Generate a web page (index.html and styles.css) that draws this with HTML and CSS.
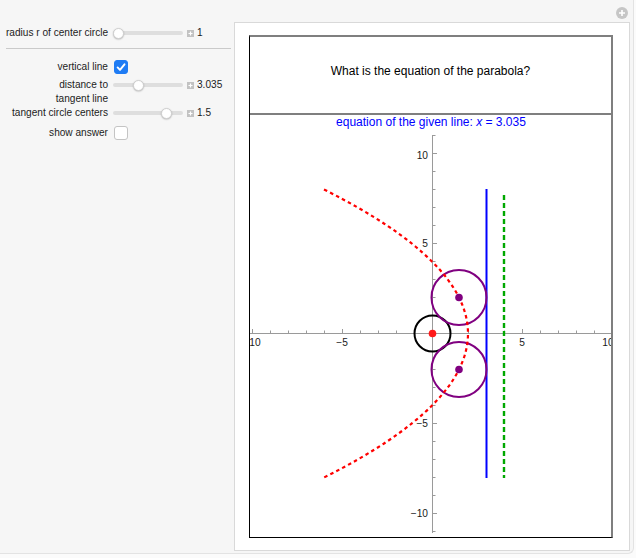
FILE: index.html
```html
<!DOCTYPE html>
<html>
<head>
<meta charset="utf-8">
<link rel="stylesheet" href="styles.css">
</head>
<body>
<div class="frame">
  <aside class="controls">
    <div class="row first">
      <span class="label">radius r of center circle</span>
      <div class="slider"><div class="track"></div><div class="thumb" style="left:0px"></div></div>
      <svg class="plus" viewBox="0 0 7 7"><rect width="7" height="7" fill="#c2c2c2"/><path d="M3.5 1.5v4M1.5 3.5h4" stroke="#fff" stroke-width="1.2"/></svg>
      <span class="value">1</span>
    </div>
    <div class="divider"></div>
    <div class="row check-row">
      <span class="label">vertical line</span>
      <span class="checkbox checked"><svg viewBox="0 0 14 14"><path d="M3.6 7.4l2.4 2.5 4.5-5.6" fill="none" stroke="#fff" stroke-width="1.9" stroke-linecap="round" stroke-linejoin="round"/></svg></span>
    </div>
    <div class="row two-line">
      <span class="label">distance to<br>tangent line</span>
      <div class="slider"><div class="track"></div><div class="thumb" style="left:19.5px"></div></div>
      <svg class="plus" viewBox="0 0 7 7"><rect width="7" height="7" fill="#c2c2c2"/><path d="M3.5 1.5v4M1.5 3.5h4" stroke="#fff" stroke-width="1.2"/></svg>
      <span class="value">3.035</span>
    </div>
    <div class="row">
      <span class="label">tangent circle centers</span>
      <div class="slider"><div class="track"></div><div class="thumb" style="left:47.5px"></div></div>
      <svg class="plus" viewBox="0 0 7 7"><rect width="7" height="7" fill="#c2c2c2"/><path d="M3.5 1.5v4M1.5 3.5h4" stroke="#fff" stroke-width="1.2"/></svg>
      <span class="value">1.5</span>
    </div>
    <div class="row check-row last">
      <span class="label">show answer</span>
      <span class="checkbox"></span>
    </div>
  </aside>
  <main class="output">
    <div class="topbar">
      <svg class="addicon" viewBox="0 0 12 12"><circle cx="6" cy="6" r="6" fill="#c6c6c6"/><path d="M6 3v6M3 6h6" stroke="#fff" stroke-width="1.6"/></svg>
    </div>
    <div class="panel">
      <div class="plotbox">
        <div class="question">What is the equation of the parabola?</div>
        <svg class="graph" width="361" height="422" viewBox="250 115 361 422">
          <text class="plotlabel" x="431" y="126" text-anchor="middle">equation of the given line: <tspan font-style="italic">x</tspan> = 3.035</text>
          <g class="axes" stroke="#9a9a9a" stroke-width="1">
            <line x1="250" y1="333.5" x2="611" y2="333.5"/>
            <line x1="432.5" y1="135" x2="432.5" y2="533"/>
            <path d="M252.5 333v-4M270.5 333v-2.5M288.5 333v-2.5M306.5 333v-2.5M324.5 333v-2.5M342.5 333v-4M360.5 333v-2.5M378.5 333v-2.5M396.5 333v-2.5M414.5 333v-2.5M450.5 333v-2.5M468.5 333v-2.5M486.5 333v-2.5M504.5 333v-2.5M522.5 333v-4M540.5 333v-2.5M558.5 333v-2.5M576.5 333v-2.5M594.5 333v-2.5"/>
            <path d="M433 135.5h2.5M433 153.5h4M433 171.5h2.5M433 189.5h2.5M433 207.5h2.5M433 225.5h2.5M433 243.5h4M433 261.5h2.5M433 279.5h2.5M433 297.5h2.5M433 315.5h2.5M433 351.5h2.5M433 369.5h2.5M433 387.5h2.5M433 405.5h2.5M433 423.5h4M433 441.5h2.5M433 459.5h2.5M433 477.5h2.5M433 495.5h2.5M433 513.5h4M433 531.5h2.5"/>
          </g>
          <g class="ticklabels">
            <text x="252" y="346" text-anchor="middle">−10</text>
            <text x="342" y="346" text-anchor="middle">−5</text>
            <text x="522" y="346" text-anchor="middle">5</text>
            <text x="608" y="346" text-anchor="middle">10</text>
            <text x="428" y="159" text-anchor="end">10</text>
            <text x="428" y="247" text-anchor="end">5</text>
            <text x="428" y="427" text-anchor="end">−5</text>
            <text x="428" y="517" text-anchor="end">−10</text>
          </g>
          <line x1="486.5" y1="189" x2="486.5" y2="478" stroke="#0000ff" stroke-width="2"/>
          <line x1="504" y1="195" x2="504" y2="478" stroke="#00a800" stroke-width="2.4" stroke-dasharray="5 3"/>
          <circle cx="432.5" cy="333.5" r="18" fill="none" stroke="#000" stroke-width="2"/>
          <circle cx="459" cy="297.5" r="27.5" fill="none" stroke="#800080" stroke-width="2"/>
          <circle cx="459" cy="369.5" r="27.5" fill="none" stroke="#800080" stroke-width="2"/>
          <path d="M324 189.5 Q612 333.5 324 477.5" fill="none" stroke="#ff0000" stroke-width="2.2" stroke-dasharray="3.5 3.2"/>
          <circle cx="432.5" cy="333.5" r="3.8" fill="#ff1a1a"/>
          <circle cx="459" cy="297.5" r="3.8" fill="#800080"/>
          <circle cx="459" cy="369.5" r="3.8" fill="#800080"/>
        </svg>
      </div>
    </div>
  </main>
</div>
</body>
</html>
```
FILE: styles.css
```css
html, body {
  margin: 0;
  padding: 0;
  background: #fbfbfb;
}
.frame {
  display: flex;
  width: 633px;
  height: 553px;
  background: #f6f6f6;
  border-right: 1px solid #e3e3e3;
  border-bottom: 1px solid #e3e3e3;
  border-bottom-right-radius: 6px;
  font-family: "Liberation Sans", Arial, sans-serif;
}
.controls {
  width: 234px;
  flex: none;
  box-sizing: border-box;
  padding: 26px 0 0 6px;
  font-size: 10.1px;
  color: #1c1c1c;
}
.row {
  display: flex;
  align-items: center;
  height: 14px;
  line-height: 14px;
}
.row .label {
  width: 102px;
  flex: none;
  text-align: right;
  white-space: nowrap;
}
.row.first .label {
  text-align: left;
}
.slider {
  position: relative;
  width: 70px;
  height: 14px;
  margin-left: 5px;
  flex: none;
}
.track {
  position: absolute;
  left: 0;
  right: 0;
  top: 5px;
  height: 4px;
  border-radius: 2px;
  background: #dedede;
}
.thumb {
  position: absolute;
  top: 1.5px;
  width: 11px;
  height: 11px;
  box-sizing: border-box;
  border-radius: 50%;
  background: #ffffff;
  border: 1px solid #cfcfcf;
  box-shadow: 0 0.5px 1.5px rgba(0,0,0,0.25);
}
.plus {
  width: 7px;
  height: 7px;
  margin-left: 4px;
  flex: none;
}
.value {
  margin-left: 3px;
}
.divider {
  width: 225px;
  height: 1px;
  background: #cacaca;
  margin: 8px 0 11px 0;
}
.checkbox {
  width: 14px;
  height: 14px;
  margin-left: 6px;
  box-sizing: border-box;
  border-radius: 3px;
  background: #ffffff;
  border: 1px solid #c4c4c4;
  flex: none;
}
.checkbox.checked {
  background: #1f7cf4;
  border-color: #1f7cf4;
}
.checkbox svg {
  display: block;
  width: 14px;
  height: 14px;
  margin: -1px;
}
.row.two-line {
  height: 28px;
  margin-top: 4px;
  align-items: flex-start;
}
.row.two-line .plus {
  margin-top: 3.5px;
}
.row.last {
  margin-top: 6px;
}
.output {
  width: 399px;
  flex: none;
  display: flex;
  flex-direction: column;
}
.topbar {
  height: 22px;
  display: flex;
  justify-content: flex-end;
  box-sizing: border-box;
  padding: 7px 5px 0 0;
}
.addicon {
  width: 12px;
  height: 12px;
  display: block;
}
.panel {
  width: 396px;
  height: 529px;
  box-sizing: border-box;
  background: #ffffff;
  border: 1px solid #d9d9d9;
  padding: 12px 16px 12px 14px;
}
.plotbox {
  width: 364px;
  height: 503px;
  box-sizing: border-box;
  border-top: 2px solid #7f7f7f;
  border-right: 2px solid #7f7f7f;
  border-left: 1px solid #000000;
  border-bottom: 1px solid #000000;
  display: flex;
  flex-direction: column;
}
.question {
  height: 78px;
  box-sizing: border-box;
  padding-top: 27px;
  border-bottom: 2px solid #7f7f7f;
  text-align: center;
  font-size: 12px;
  line-height: 14px;
  color: #000;
}
.graph {
  display: block;
}
.plotlabel {
  font-family: "Liberation Sans", Arial, sans-serif;
  font-size: 12px;
  fill: #0000ff;
}
.ticklabels text {
  font-family: "Liberation Sans", Arial, sans-serif;
  font-size: 10.2px;
  fill: #1a1a1a;
}
```
